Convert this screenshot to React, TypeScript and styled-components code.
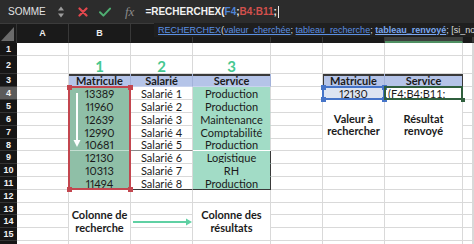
import React from "react";
import styled, { createGlobalStyle, css } from "styled-components";

const GlobalStyle = createGlobalStyle`
  html, body { margin: 0; padding: 0; background: #ffffff; }
  body { overflow: hidden; }
`;

const ROW_H = [13, 18, 13, 13, 13, 13, 13, 12, 13, 13, 13, 13, 12, 13, 13, 13];
const GRID = "#d9d9d9";
const DARK = "#3a3a3a";
const KEY_FILL = "#8fbfa7";
const SVC_FILL = "#a2dcc6";
const HEAD_FILL = "#b5c4e8";

const ids = ["13389", "11960", "12639", "12990", "10681", "12130", "10313", "11494"];
const services = ["Production", "Production", "Maintenance", "Comptabilité", "Production", "Logistique", "RH", "Production"];
/* Only A and B show: the formula tooltip hides the other column letters. */
const letters = ["A", "B", "", "", "", "", "", "", ""];

const Page = styled.div`
  position: relative;
  width: 474px;
  height: 244px;
  overflow: hidden;
  background: #ffffff;
  display: flex;
  flex-direction: column;
`;

const Toolbar = styled.div`
  flex: none;
  height: 24px;
  box-sizing: border-box;
  border-bottom: 1px solid #3b3b3b;
  background: #2c2c2c;
  display: flex;
  align-items: center;
  font-family: "Liberation Sans", Arial, sans-serif;
`;

const NameBox = styled.div`
  width: 68px;
  height: 100%;
  box-sizing: border-box;
  padding: 0 4px 0 8px;
  display: flex;
  align-items: center;
  justify-content: space-between;
  color: #e2e2e2;
  font-size: 10px;
`;

const Stepper = styled.svg`
  width: 6px;
  height: 12px;
  flex: none;
`;

const ActionIcon = styled.svg<{ $gap: number }>`
  margin-left: ${(p) => p.$gap}px;
  flex: none;
`;

const Fx = styled.span`
  margin-left: 14px;
  font-family: "Liberation Serif", serif;
  font-style: italic;
  font-size: 13px;
  color: #8a8a8a;
`;

const Formula = styled.div`
  margin-left: 11px;
  display: flex;
  align-items: center;
  font-family: "Liberation Sans Narrow", "Liberation Sans", sans-serif;
  font-weight: 700;
  font-size: 10px;
  color: #f2f2f2;
  white-space: nowrap;
`;

const Ref = styled.span<{ $color: string }>`
  color: ${(p) => p.$color};
`;

const Caret = styled.span`
  display: inline-block;
  width: 1px;
  height: 12px;
  margin-left: 1px;
  background: #e8e8e8;
`;

const Tooltip = styled.div`
  position: absolute;
  top: 23px;
  left: 154px;
  right: 0;
  height: 14px;
  z-index: 5;
  background: #1f1f1f;
  padding-left: 4px;
  display: flex;
  align-items: center;
  font-family: "Liberation Sans", Arial, sans-serif;
  font-size: 9px;
  color: #dcdcdc;
  white-space: pre;
  overflow: hidden;
`;

const Arg = styled.span<{ $bold?: boolean }>`
  color: ${(p) => (p.$bold ? "#7aa8ef" : "#5b90e3")};
  text-decoration: underline;
  font-weight: ${(p) => (p.$bold ? 700 : 400)};
`;

const Sheet = styled.div`
  display: grid;
  grid-template-columns: 17px 52px 62px 62px 78px 52px 62px 78px 1fr;
  grid-template-rows: 19px ${ROW_H.map((h) => `${h}px`).join(" ")};
  font-family: Lato, "Open Sans", sans-serif;
  font-size: 11px;
  color: #1b1b1b;
`;

const Corner = styled.div`
  grid-row: 1;
  grid-column: 1;
  background: #1a1a1a;
  border-right: 1px solid #333;
  box-sizing: border-box;
  display: flex;
  align-items: flex-end;
  justify-content: flex-end;
  padding: 0 2px 2px 0;
`;

const ColHead = styled.div<{ $c: number; $active?: boolean }>`
  grid-row: 1;
  grid-column: ${(p) => p.$c + 1};
  box-sizing: border-box;
  background: ${(p) => (p.$active ? "#3d3f3d" : "#1a1a1a")};
  border-right: 1px solid #383838;
  border-bottom: ${(p) => (p.$active ? "2px solid #4f8f62" : "1px solid #1a1a1a")};
  color: #ededed;
  font-family: "Liberation Sans", Arial, sans-serif;
  font-weight: 700;
  font-size: 9px;
  display: flex;
  align-items: center;
  justify-content: center;
`;

const RowHead = styled.div<{ $r: number; $active?: boolean }>`
  grid-row: ${(p) => p.$r + 1};
  grid-column: 1;
  box-sizing: border-box;
  background: ${(p) => (p.$active ? "#5b5b5b" : "#161616")};
  border-bottom: 1px solid #343434;
  color: #f2f2f2;
  font-family: "Liberation Sans", Arial, sans-serif;
  font-weight: 700;
  font-size: 9px;
  display: flex;
  align-items: center;
  justify-content: center;
  overflow: hidden;
`;

type Pos = { $r: number; $c: number; $rs?: number };

const GridCell = styled.div<Pos & { $bb?: string; $br?: string }>`
  grid-row: ${(p) => p.$r + 1} / span ${(p) => p.$rs ?? 1};
  grid-column: ${(p) => p.$c + 1};
  box-sizing: border-box;
  min-width: 0;
  overflow: hidden;
  background: #ffffff;
  border-right: 1px solid ${(p) => p.$br ?? GRID};
  border-bottom: 1px solid ${(p) => p.$bb ?? GRID};
  display: flex;
  align-items: center;
  justify-content: center;
  white-space: nowrap;
`;

const StepCell = styled(GridCell)`
  color: #46c890;
  font-weight: 700;
  font-size: 15px;
  padding-top: 3px;
`;

const HeadCell = styled(GridCell)<{ $leftEdge?: boolean; $rightEdge?: boolean }>`
  background: ${HEAD_FILL};
  font-weight: 700;
  border-bottom-color: #c9d3ee;
  border-right-color: ${(p) => (p.$rightEdge ? DARK : "#a3b2da")};
  box-shadow: inset 0 2px 0 ${DARK}
    ${(p) => (p.$leftEdge ? `, inset 1px 0 0 ${DARK}` : "")};
  padding-top: 1px;
`;

const KeyCell = styled(GridCell)`
  background: ${KEY_FILL};
  font-variant-numeric: proportional-nums;
`;

const NameCell = styled(GridCell)``;

const ServiceCell = styled(GridCell)`
  background: ${SVC_FILL};
`;

const LookupCell = styled(GridCell)`
  background: #dde4f2;
  font-variant-numeric: proportional-nums;
`;

const EditCell = styled(GridCell)`
  justify-content: flex-start;
  padding-left: 3px;
`;

const NoteCell = styled(GridCell)`
  font-weight: 700;
  white-space: pre-line;
  text-align: center;
  line-height: 12.5px;
`;

const BlankCell = styled(GridCell)``;

const Selection = styled.div<{ $r1: number; $r2: number; $c: number; $color: string; $w: number }>`
  grid-row: ${(p) => p.$r1 + 1} / ${(p) => p.$r2 + 2};
  grid-column: ${(p) => p.$c + 1};
  position: relative;
  z-index: 3;
  pointer-events: none;
  margin: -1px 0 0 -1px;
  border: ${(p) => p.$w}px solid ${(p) => p.$color};
`;

const handlePos = {
  tl: css`top: -3.5px; left: -3.5px;`,
  tr: css`top: -3.5px; right: -3.5px;`,
  bl: css`bottom: -3.5px; left: -3.5px;`,
  br: css`bottom: -3.5px; right: -3.5px;`,
};

const Handle = styled.span<{ $at: keyof typeof handlePos; $color: string; $size?: number }>`
  position: absolute;
  width: ${(p) => p.$size ?? 5}px;
  height: ${(p) => p.$size ?? 5}px;
  background: ${(p) => p.$color};
  ${(p) => handlePos[p.$at]}
`;

const DrawLayer = styled.div<{ $r1: number; $r2: number; $c: number }>`
  grid-row: ${(p) => p.$r1 + 1} / ${(p) => p.$r2 + 2};
  grid-column: ${(p) => p.$c + 1};
  position: relative;
  z-index: 2;
  pointer-events: none;
  display: flex;
  align-items: flex-start;
  justify-content: flex-start;
`;

const cellKey = (r: number, c: number) => `${r}-${c}`;

const merges: { r: number; c: number; rs: number; text: string }[] = [
  { r: 13, c: 2, rs: 3, text: "Colonne de\nrecherche" },
  { r: 13, c: 4, rs: 3, text: "Colonne des\nrésultats" },
  { r: 5, c: 6, rs: 4, text: "Valeur à\nrechercher" },
  { r: 5, c: 7, rs: 4, text: "Résultat\nrenvoyé" },
];

function isCovered(r: number, c: number) {
  return merges.some((m) => m.c === c && r > m.r && r < m.r + m.rs);
}

function renderCell(r: number, c: number) {
  const key = cellKey(r, c);
  const merge = merges.find((m) => m.r === r && m.c === c);
  if (merge) {
    return (
      <NoteCell key={key} $r={r} $c={c} $rs={merge.rs}>
        {merge.text}
      </NoteCell>
    );
  }
  if (isCovered(r, c)) return null;
  if (r === 2 && c >= 2 && c <= 4) {
    return (
      <StepCell key={key} $r={r} $c={c}>
        {String(c - 1)}
      </StepCell>
    );
  }
  if (r === 3 && ((c >= 2 && c <= 4) || c === 6 || c === 7)) {
    const label = ({ 2: "Matricule", 3: "Salarié", 4: "Service", 6: "Matricule", 7: "Service" } as Record<number, string>)[c];
    return (
      <HeadCell key={key} $r={r} $c={c} $leftEdge={c === 6} $rightEdge={c === 7}>
        {label}
      </HeadCell>
    );
  }
  if (r >= 4 && r <= 11) {
    const i = r - 4;
    if (c === 2) {
      return (
        <KeyCell key={key} $r={r} $c={c} $bb={r === 8 ? "#c3ddd0" : KEY_FILL}>
          {ids[i]}
        </KeyCell>
      );
    }
    if (c === 3) {
      return (
        <NameCell key={key} $r={r} $c={c} $bb={r === 8 ? "#8a8a8a" : r === 11 ? DARK : GRID}>
          {`Salarié ${i + 1}`}
        </NameCell>
      );
    }
    if (c === 4) {
      return (
        <ServiceCell
          key={key}
          $r={r}
          $c={c}
          $bb={r === 8 ? "#ffffff" : r === 11 ? DARK : SVC_FILL}
          $br={r >= 9 ? DARK : GRID}
        >
          {services[i]}
        </ServiceCell>
      );
    }
  }
  if (r === 4 && c === 6) {
    return (
      <LookupCell key={key} $r={r} $c={c}>
        12130
      </LookupCell>
    );
  }
  if (r === 4 && c === 7) {
    return (
      <EditCell key={key} $r={r} $c={c}>
        (F4;B4:B11;
      </EditCell>
    );
  }
  return <BlankCell key={key} $r={r} $c={c} />;
}

export default function App() {
  const rows = ROW_H.map((_, i) => i + 1);
  const cols = [1, 2, 3, 4, 5, 6, 7, 8, 9];
  return (
    <>
      <GlobalStyle />
      <Page>
        <Toolbar>
          <NameBox>
            SOMME
            <Stepper viewBox="0 0 6 12">
              <polygon points="0,4.5 6,4.5 3,0.5" fill="#9c9c9c" />
              <polygon points="0,7.5 6,7.5 3,11.5" fill="#9c9c9c" />
            </Stepper>
          </NameBox>
          <ActionIcon $gap={10} width="10" height="10" viewBox="0 0 10 10">
            <path d="M1.5 1.5 L8.5 8.5 M8.5 1.5 L1.5 8.5" stroke="#e2474d" strokeWidth="2.2" strokeLinecap="round" />
          </ActionIcon>
          <ActionIcon $gap={11} width="12" height="10" viewBox="0 0 12 10">
            <path d="M1 5.2 L4.4 8.6 L11 1.6" stroke="#4fae72" strokeWidth="2" fill="none" strokeLinecap="round" strokeLinejoin="round" />
          </ActionIcon>
          <Fx>fx</Fx>
          <Formula>
            =RECHERCHEX(
            <Ref $color="#4f84d6">F4</Ref>;<Ref $color="#d2504c">B4:B11</Ref>;
            <Caret />
          </Formula>
        </Toolbar>

        <Tooltip>
          <Arg>RECHERCHEX</Arg>(<Arg>valeur_cherchée</Arg>; <Arg>tableau_recherche</Arg>;{" "}
          <Arg $bold>tableau_renvoyé</Arg>; [si_non_trouvé]
        </Tooltip>

        <Sheet>
          <Corner>
            <svg width="13" height="14" viewBox="0 0 13 14">
              <polygon points="13,0 13,14 0,14" fill="#6a6a6a" />
            </svg>
          </Corner>
          {cols.map((c) => (
            <ColHead key={`h${c}`} $c={c} $active={c === 7}>
              {letters[c - 1]}
            </ColHead>
          ))}
          {rows.map((r) => (
            <RowHead key={`r${r}`} $r={r} $active={r === 4}>
              {r < 16 ? r : ""}
            </RowHead>
          ))}
          {rows.map((r) => cols.map((c) => renderCell(r, c)))}

          <DrawLayer $r1={4} $r2={8} $c={2}>
            <svg width="16" height="64" viewBox="0 0 16 64">
              <line x1="8" y1="6" x2="8" y2="54" stroke="#ffffff" strokeWidth="2" />
              <polygon points="4.5,53 11.5,53 8,60" fill="#ffffff" />
            </svg>
          </DrawLayer>

          <DrawLayer $r1={13} $r2={15} $c={3}>
            <svg width="62" height="38" viewBox="0 0 62 38">
              <line x1="2" y1="19" x2="56" y2="19" stroke="#5fd0a3" strokeWidth="2" />
              <polygon points="55,15.5 61,19 55,22.5" fill="#5fd0a3" />
            </svg>
          </DrawLayer>

          <Selection $r1={4} $r2={11} $c={2} $color="#c3464f" $w={2}>
            <Handle $at="tl" $color="#c3464f" />
            <Handle $at="tr" $color="#c3464f" />
            <Handle $at="bl" $color="#c3464f" />
            <Handle $at="br" $color="#c3464f" />
          </Selection>

          <Selection $r1={4} $r2={4} $c={6} $color="#4674c8" $w={2}>
            <Handle $at="tl" $color="#4674c8" />
            <Handle $at="tr" $color="#4674c8" />
            <Handle $at="bl" $color="#4674c8" />
            <Handle $at="br" $color="#4674c8" />
          </Selection>

          <Selection $r1={4} $r2={4} $c={7} $color="#2f5f3d" $w={2}>
            <Handle $at="br" $color="#2f5f3d" $size={4} />
          </Selection>
        </Sheet>
      </Page>
    </>
  );
}
